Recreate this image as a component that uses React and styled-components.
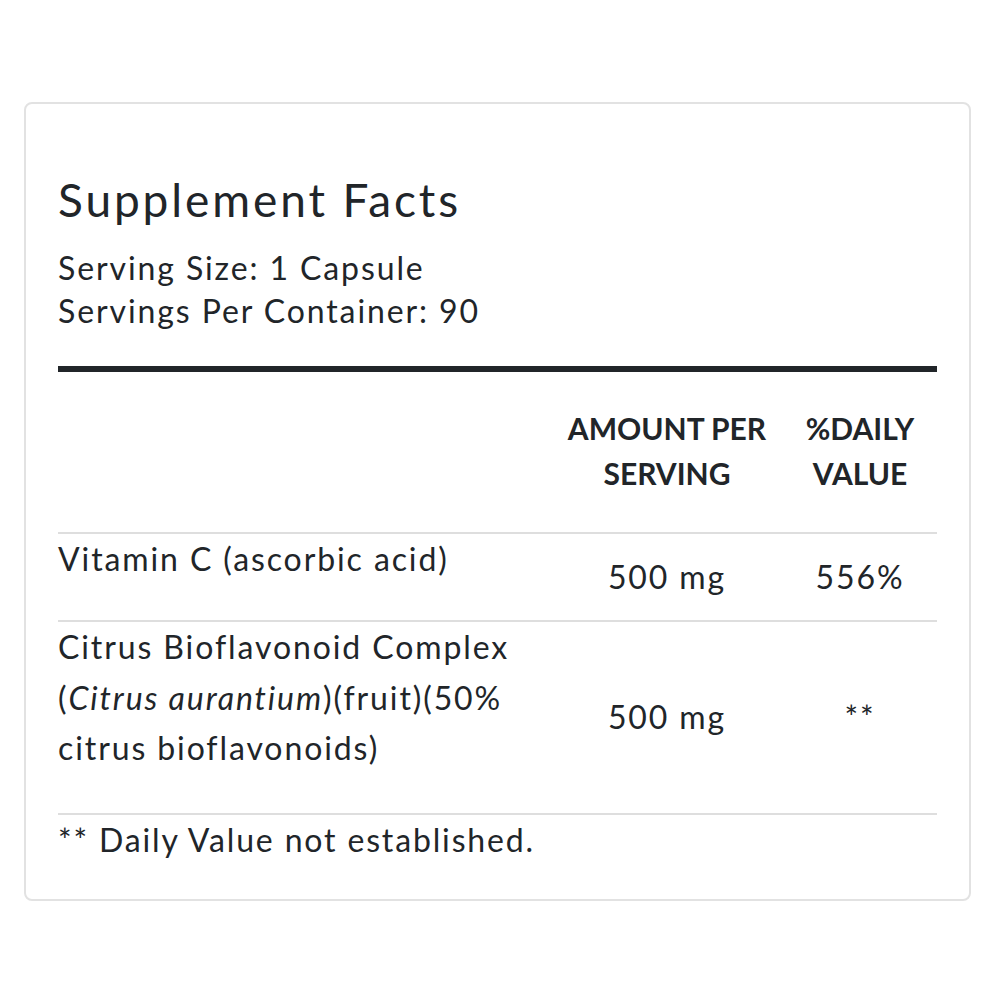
import React from 'react';
import styled, { createGlobalStyle } from 'styled-components';

const GlobalStyle = createGlobalStyle`
  body {
    margin: 0;
    background: #fff;
    font-family: Lato, "Open Sans", sans-serif;
    color: #212529;
    letter-spacing: 1.9px;
  }
`;

const Card = styled.div`
  box-sizing: border-box;
  width: 947px;
  margin: 102px 0 0 24px;
  padding: 71px 32px 34px;
  border: 2px solid #e2e2e2;
  border-radius: 8px;
`;

const Title = styled.h2`
  margin: 0;
  font-size: 46px;
  font-weight: 400;
  line-height: 50px;
  letter-spacing: 2.9px;
`;

const Serving = styled.div`
  margin-top: 21px;
  font-size: 32px;
  line-height: 43px;
`;

const ThickRule = styled.hr`
  margin: 34px 0 0;
  border: none;
  height: 6px;
  background: #212529;
`;

const Row = styled.div`
  display: grid;
  grid-template-columns: 1fr 232px 154px;
  align-items: center;
  border-bottom: 2px solid #dedede;
  font-size: 32px;
  line-height: 50px;
`;

const HeadCell = styled.div`
  text-align: center;
  font-size: 30px;
  font-weight: 700;
  line-height: 45px;
  letter-spacing: 0;
  padding: 34px 0 36px;
`;

const Name = styled.div`
  align-self: start;
  padding: 0 0 ${(p) => (p.$tall ? 39 : 36)}px;
  line-height: ${(p) => (p.$tall ? 50.5 : 50)}px;
`;

const Value = styled.div`
  text-align: center;
`;

const Footer = styled.div`
  font-size: 32px;
  line-height: 50px;
  letter-spacing: 1.85px;
`;

const rows = [
  { name: 'Vitamin C (ascorbic acid)', amount: '500 mg', dv: '556%' },
  {
    name: (
      <>
        Citrus Bioflavonoid Complex (<i>Citrus aurantium</i>)(fruit)(50% citrus bioflavonoids)
      </>
    ),
    amount: '500 mg',
    dv: '**',
    tall: true,
  },
];

export default function App() {
  return (
    <>
      <GlobalStyle />
      <Card>
        <Title>Supplement Facts</Title>
        <Serving>
          Serving Size: 1 Capsule
          <br />
          Servings Per Container: 90
        </Serving>
        <ThickRule />
        <Row>
          <div />
          <HeadCell>AMOUNT PER<br />SERVING</HeadCell>
          <HeadCell>%DAILY<br />VALUE</HeadCell>
        </Row>
        {rows.map((r, i) => (
          <Row key={i}>
            <Name $tall={r.tall}>{r.name}</Name>
            <Value>{r.amount}</Value>
            <Value>{r.dv}</Value>
          </Row>
        ))}
        <Footer>** Daily Value not established.</Footer>
      </Card>
    </>
  );
}
